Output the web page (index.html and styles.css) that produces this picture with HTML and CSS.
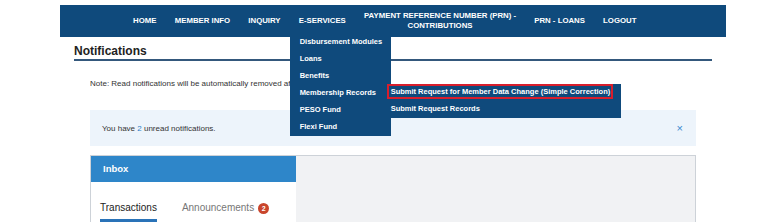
FILE: index.html
```html
<!DOCTYPE html>
<html lang="en">
<head>
<meta charset="utf-8">
<title>Notifications</title>
<link rel="stylesheet" href="styles.css">
</head>
<body>
<header class="topbar">
  <nav class="nav">
    <ul class="menu">
      <li class="menu-item">Home</li>
      <li class="menu-item">Member Info</li>
      <li class="menu-item">Inquiry</li>
      <li class="menu-item">E-Services
        <ul class="dropdown">
          <li class="drop-item">Disbursement Modules</li>
          <li class="drop-item">Loans</li>
          <li class="drop-item">Benefits</li>
          <li class="drop-item">Membership Records
            <ul class="submenu">
              <li class="sub-item sub-item-first"><span class="sub-link highlighted">Submit Request for Member Data Change (Simple Correction)</span></li>
              <li class="sub-item">Submit Request Records</li>
            </ul>
          </li>
          <li class="drop-item">PESO Fund</li>
          <li class="drop-item">Flexi Fund</li>
        </ul>
      </li>
      <li class="menu-item">Payment Reference Number (PRN) -<br>Contributions</li>
      <li class="menu-item">PRN - Loans</li>
      <li class="menu-item">Logout</li>
    </ul>
  </nav>
</header>
<main class="page">
  <h1 class="title">Notifications</h1>
  <section class="content">
    <p class="note">Note: Read notifications will be automatically removed after 30 days.</p>
    <div class="alert">
      <span>You have <span class="count">2</span> unread notifications.</span>
      <span class="close">×</span>
    </div>
    <div class="panel">
      <div class="inbox">
        <div class="inbox-head">Inbox</div>
        <div class="tabs">
          <span class="tab tab-active">Transactions</span>
          <span class="tab">Announcements<span class="badge">2</span></span>
        </div>
      </div>
      <div class="detail"></div>
    </div>
  </section>
</main>
</body>
</html>
```
FILE: styles.css
```css
body {
  margin: 0;
  font-family: "Liberation Sans", Arial, sans-serif;
  background: #fff;
  color: #333;
}

.topbar {
  margin: 5px 0 0 60px;
  width: 666px;
  height: 32px;
  background: #0f4a7c;
  position: relative;
  z-index: 10;
}

.nav {
  height: 100%;
}

.menu {
  list-style: none;
  margin: 0;
  padding: 0 0 0 64px;
  display: flex;
  height: 100%;
}

.menu-item {
  position: relative;
  display: flex;
  align-items: center;
  padding: 0 9.1px;
  color: #fff;
  font-weight: bold;
  font-size: 7.8px;
  line-height: 10px;
  text-transform: uppercase;
  text-align: center;
  white-space: nowrap;
}

.dropdown {
  position: absolute;
  left: 0;
  top: 100%;
  width: 101px;
  margin: 0;
  padding: 0 0 1px;
  list-style: none;
  background: #0f4a7c;
  text-transform: none;
  text-align: left;
  font-size: 7.5px;
}

.drop-item {
  position: relative;
  padding-left: 10px;
  line-height: 17px;
}

.drop-item:first-child {
  margin-top: -4px;
}

.submenu {
  position: absolute;
  left: 96px;
  top: 0;
  width: 235px;
  margin: 0;
  padding: 0 0 1px;
  list-style: none;
  background: #0f4a7c;
}

.sub-item {
  padding-left: 5px;
  line-height: 17px;
}

.sub-item-first {
  padding-left: 1px;
  height: 16px;
}

.sub-link {
  display: block;
  width: fit-content;
}

.highlighted {
  border: 2px solid #d81e2c;
  line-height: 11px;
  padding: 0 1px 0 2px;
}

.page {
  margin-left: 74px;
  width: 638px;
}

.title {
  margin: 7px 0 0;
  font-size: 12px;
  line-height: 14px;
  font-weight: bold;
  color: #222;
  padding-bottom: 1px;
  border-bottom: 2px solid #34587c;
}

.content {
  padding: 0 16px;
}

.note {
  margin: 17px 0 0;
  font-size: 8px;
  line-height: 12px;
  color: #333;
}

.alert {
  margin-top: 20px;
  height: 36px;
  background: #edf4fb;
  display: flex;
  align-items: center;
  justify-content: space-between;
  padding: 0 13px 0 12px;
  font-size: 8px;
  color: #333;
}

.count {
  color: #2f7fc8;
}

.close {
  color: #3a8bd0;
  font-size: 11px;
}

.panel {
  margin-top: 9px;
  height: 80px;
  display: flex;
  border: 1px solid #cdd2d8;
  border-bottom: none;
  background: #f1f2f4;
}

.inbox {
  width: 205px;
  background: #fff;
}

.inbox-head {
  height: 26px;
  line-height: 26px;
  padding-left: 12px;
  background: #2e86c9;
  color: #fff;
  font-weight: bold;
  font-size: 9.5px;
}

.tabs {
  display: flex;
  gap: 25px;
  padding: 20px 0 0 9px;
}

.tab {
  font-size: 10px;
  line-height: 12px;
  padding-bottom: 5px;
  color: #777;
}

.tab-active {
  color: #222;
  border-bottom: 3px solid #2a73b8;
}

.badge {
  display: inline-block;
  width: 11px;
  height: 11px;
  margin-left: 4px;
  border-radius: 50%;
  background: #c9452c;
  color: #fff;
  font-size: 7px;
  font-weight: bold;
  line-height: 11px;
  text-align: center;
  vertical-align: middle;
}

.detail {
  flex: 1;
}
```
